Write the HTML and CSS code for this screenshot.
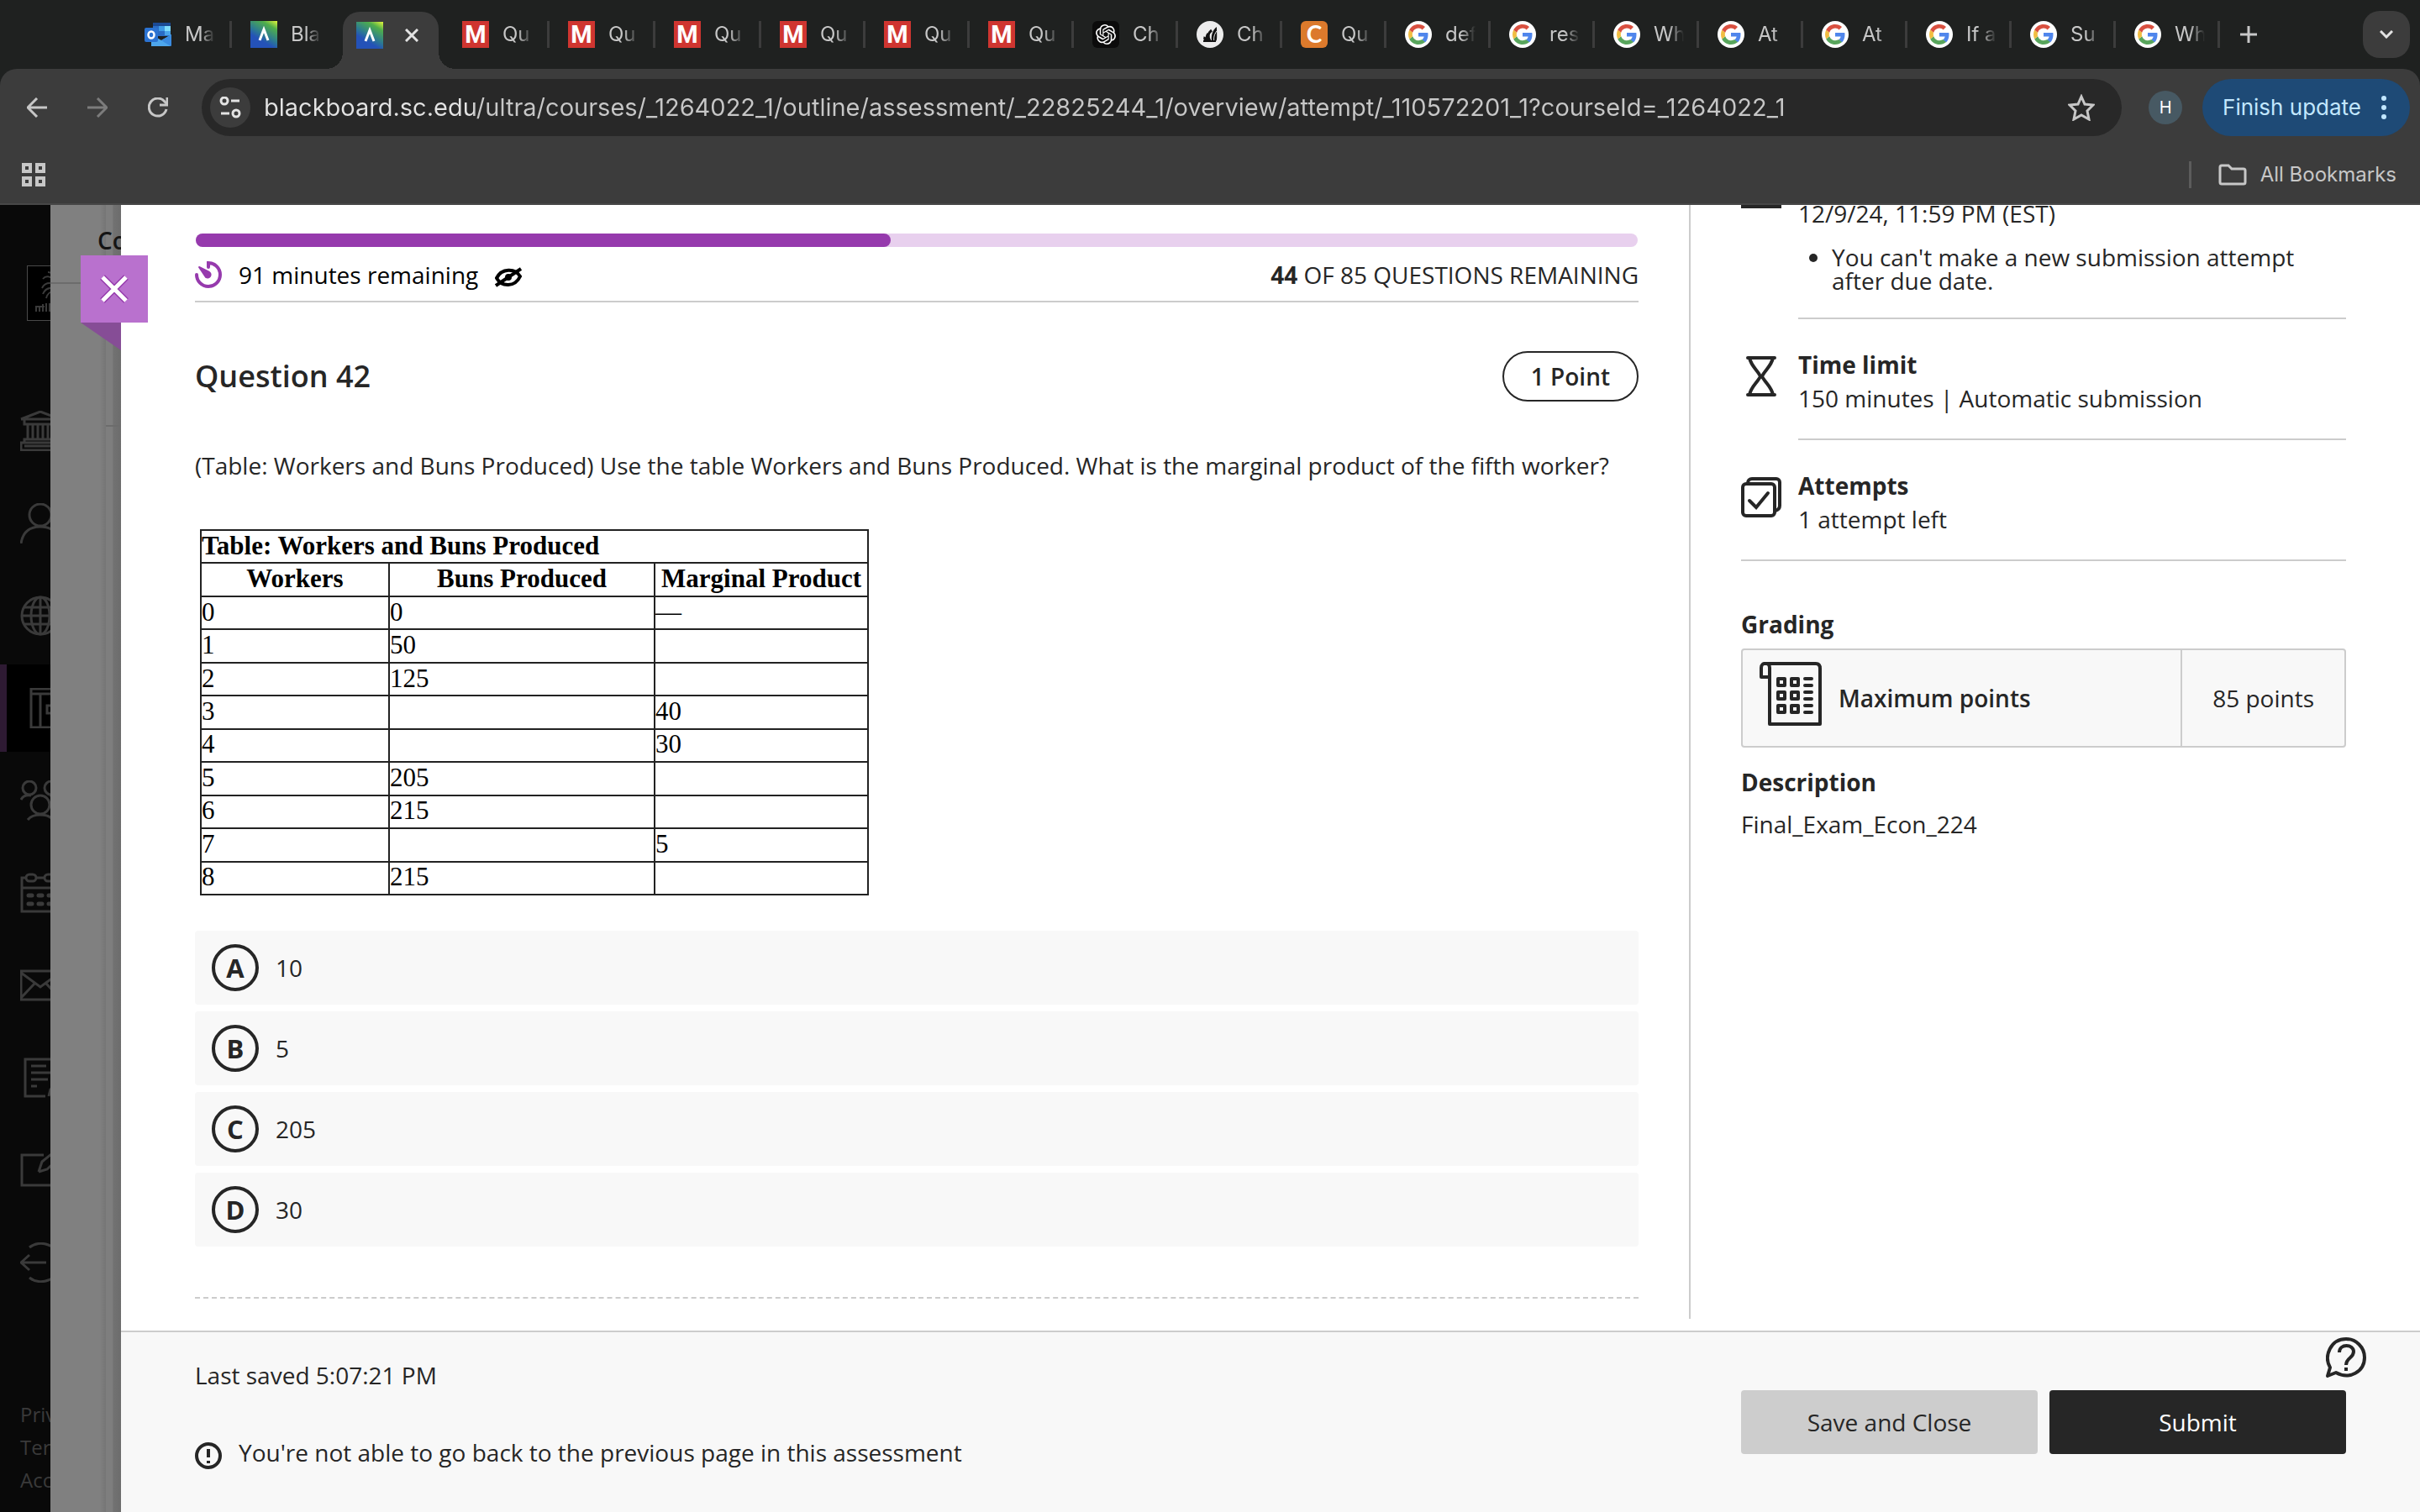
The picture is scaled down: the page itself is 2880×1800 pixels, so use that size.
FILE: index.html
```html
<!DOCTYPE html>
<html lang="en">
<head>
	<meta charset="utf-8">
	<title>Question 42</title>
	<link rel="stylesheet" href="styles.css">
</head>
<body>

	<!-- shared icons -->
	<svg class="defs" width="0" height="0" aria-hidden="true">
		<defs>
			<linearGradient id="bbgrad" x1="1" y1="0" x2="0.4" y2="1">
				<stop offset="0" stop-color="#e4f53a"/>
				<stop offset="0.25" stop-color="#4fae4b"/>
				<stop offset="0.6" stop-color="#2c7a92"/>
				<stop offset="0.8" stop-color="#2452b8"/>
			</linearGradient>
			<symbol id="outlook" viewBox="0 0 32 32">
				<path d="M10 2h21v16H10z" fill="#2a6cc4"/>
				<path d="M10 2h21v4H10z" fill="#1b4a94"/>
				<path d="M17 6h7v6h-7z" fill="#3f9be6"/>
				<path d="M24 6h7v6h-7z" fill="#7fdcfb"/>
				<path d="M24 12h7v5h-7z" fill="#4aa5ea"/>
				<path d="M8 16l12 7 12-7v12a2 2 0 0 1-2 2H8z" fill="#4da6ec"/>
				<path d="M20 23l12-7v12a2 2 0 0 1-1 2z" fill="#3a8be0"/>
				<rect x="0" y="8" width="16" height="17" rx="2" fill="#2b73d2"/>
				<ellipse cx="8" cy="16.500" rx="3.500" ry="4" fill="none" stroke="#fff" stroke-width="2.500"/>
			</symbol>
			<symbol id="bb" viewBox="0 0 32 32">
				<rect width="32" height="32" fill="url(#bbgrad)"/>
				<path d="M11 23l5-13 5 13" fill="none" stroke="#fff" stroke-width="3"/>
			</symbol>
			<symbol id="mcg" viewBox="0 0 32 32">
				<rect width="32" height="32" fill="#cf3530"/>
				<text x="16" y="26" class="fav-m" text-anchor="middle">M</text>
			</symbol>
			<symbol id="gpt" viewBox="0 0 32 32">
				<rect width="32" height="32" rx="6" fill="#0b0b0b"/>
				<g transform="translate(4 4)"><path fill="#fff" d="M22.2819 9.8211a5.9847 5.9847 0 0 0-.5157-4.9108 6.0462 6.0462 0 0 0-6.5098-2.9A6.0651 6.0651 0 0 0 4.9807 4.1818a5.9847 5.9847 0 0 0-3.9977 2.9 6.0462 6.0462 0 0 0 .7427 7.0966 5.98 5.98 0 0 0 .511 4.9107 6.051 6.051 0 0 0 6.5146 2.9001A5.9847 5.9847 0 0 0 13.2599 24a6.0557 6.0557 0 0 0 5.7718-4.2058 5.9894 5.9894 0 0 0 3.9977-2.9001 6.0557 6.0557 0 0 0-.7475-7.0729zm-9.022 12.6081a4.4755 4.4755 0 0 1-2.8764-1.0408l.1419-.0804 4.7783-2.7582a.7948.7948 0 0 0 .3927-.6813v-6.7369l2.02 1.1686a.071.071 0 0 1 .038.052v5.5826a4.504 4.504 0 0 1-4.4945 4.4944zm-9.6607-4.1254a4.4708 4.4708 0 0 1-.5346-3.0137l.142.0852 4.783 2.7582a.7712.7712 0 0 0 .7806 0l5.8428-3.3685v2.3324a.0804.0804 0 0 1-.0332.0615L9.74 19.9502a4.4992 4.4992 0 0 1-6.1408-1.6464zM2.3408 7.8956a4.485 4.485 0 0 1 2.3655-1.9728V11.6a.7664.7664 0 0 0 .3879.6765l5.8144 3.3543-2.0201 1.1685a.0757.0757 0 0 1-.071 0l-4.8303-2.7865A4.504 4.504 0 0 1 2.3408 7.872zm16.5963 3.8558L13.1038 8.364 15.1192 7.2a.0757.0757 0 0 1 .071 0l4.8303 2.7913a4.4944 4.4944 0 0 1-.6765 8.1042v-5.6772a.79.79 0 0 0-.407-.667zm2.0107-3.0231l-.142-.0852-4.7735-2.7818a.7759.7759 0 0 0-.7854 0L9.409 9.2297V6.8974a.0662.0662 0 0 1 .0284-.0615l4.8303-2.7866a4.4992 4.4992 0 0 1 6.6802 4.66zM8.3065 12.863l-2.02-1.1638a.0804.0804 0 0 1-.038-.0567V6.0742a4.4992 4.4992 0 0 1 7.3757-3.4537l-.142.0805L8.704 5.459a.7948.7948 0 0 0-.3927.6813zm1.0976-2.3654l2.602-1.4998 2.6069 1.4998v2.9994l-2.5974 1.4997-2.6067-1.4997Z"/></g>
			</symbol>
			<symbol id="wing" viewBox="0 0 32 32">
				<circle cx="16" cy="16" r="16" fill="#ececec"/>
				<path d="M24 7c-5 4-7 10-6 17h5c2-1 1-10 1-17z" fill="#111"/>
				<path d="M18 11c-4 3-5 8-2 13M14 15c-3 3-2 6 0 9M10 19c-1 2 0 3 1 5" fill="none" stroke="#111" stroke-width="3"/>
				<path d="M24 12c-3 4-4 8-3 13" fill="none" stroke="#ececec" stroke-width="1"/>
				<path d="M8 24h15" stroke="#111" stroke-width="2"/>
			</symbol>
			<symbol id="chegg" viewBox="0 0 32 32">
				<rect width="32" height="32" rx="6" fill="#dc7a2c"/>
				<text x="16" y="26" class="fav-c" text-anchor="middle">C</text>
			</symbol>
			<symbol id="google" viewBox="0 0 32 32">
				<circle cx="16" cy="16" r="16" fill="#fff"/>
				<g transform="translate(4 4)">
					<path fill="#4f86ec" d="M23.5 12.3c0-.9-.1-1.5-.2-2.2H12v4.5h6.6c-.1 1.100-.9 2.800-2.500 3.900l3.900 3c2.300-2.100 3.500-5.200 3.500-9.200z"/>
					<path fill="#58a55c" d="M12 24c3.200 0 6-1.100 8-2.900l-3.900-3c-1 .7-2.400 1.200-4.100 1.200-3.200 0-5.900-2.100-6.800-5l-4 3.100C3.200 21.300 7.300 24 12 24z"/>
					<path fill="#f1be42" d="M5.200 14.300c-.2-.7-.4-1.500-.4-2.300s.1-1.600.4-2.300l-4-3.100C.4 8.300 0 10.100 0 12s.4 3.700 1.200 5.400z"/>
					<path fill="#d95040" d="M12 4.600c2.200 0 3.700 1 4.600 1.800L20 3C18 1.100 15.200 0 12 0 7.300 0 3.200 2.700 1.200 6.600l4 3.100c.9-3 3.600-5.100 6.800-5.100z"/>
				</g>
			</symbol>
		</defs>
	</svg>

	<header class="browser">
		<div class="tabstrip">
			<button class="tab"><svg class="fav"><use href="#outlook"/></svg><span class="name">Ma</span></button>
			<button class="tab"><svg class="fav"><use href="#bb"/></svg><span class="name">Bla</span></button>
			<button class="tab active"><svg class="fav"><use href="#bb"/></svg><svg class="tabclose" viewBox="0 0 16 16"><path d="M1 1l14 14M15 1L1 15"/></svg></button>
			<button class="tab"><svg class="fav"><use href="#mcg"/></svg><span class="name">Qu</span></button>
			<button class="tab"><svg class="fav"><use href="#mcg"/></svg><span class="name">Qu</span></button>
			<button class="tab"><svg class="fav"><use href="#mcg"/></svg><span class="name">Qu</span></button>
			<button class="tab"><svg class="fav"><use href="#mcg"/></svg><span class="name">Qu</span></button>
			<button class="tab"><svg class="fav"><use href="#mcg"/></svg><span class="name">Qu</span></button>
			<button class="tab"><svg class="fav"><use href="#mcg"/></svg><span class="name">Qu</span></button>
			<button class="tab"><svg class="fav"><use href="#gpt"/></svg><span class="name">Ch</span></button>
			<button class="tab"><svg class="fav"><use href="#wing"/></svg><span class="name">Ch</span></button>
			<button class="tab"><svg class="fav"><use href="#chegg"/></svg><span class="name">Qu</span></button>
			<button class="tab"><svg class="fav"><use href="#google"/></svg><span class="name">def</span></button>
			<button class="tab"><svg class="fav"><use href="#google"/></svg><span class="name">res</span></button>
			<button class="tab"><svg class="fav"><use href="#google"/></svg><span class="name">Wh</span></button>
			<button class="tab"><svg class="fav"><use href="#google"/></svg><span class="name">At</span></button>
			<button class="tab"><svg class="fav"><use href="#google"/></svg><span class="name">At</span></button>
			<button class="tab"><svg class="fav"><use href="#google"/></svg><span class="name">If a</span></button>
			<button class="tab"><svg class="fav"><use href="#google"/></svg><span class="name">Su</span></button>
			<button class="tab"><svg class="fav"><use href="#google"/></svg><span class="name">Wh</span></button>
			<button class="newtab" aria-label="New tab"><svg viewBox="0 0 20 20"><path d="M10 0v20M0 10h20"/></svg></button>
			<button class="tabsearch" aria-label="Search tabs"><svg viewBox="0 0 16 10"><path d="M1 1l7 7 7-7"/></svg></button>
		</div>

		<div class="toolbar">
			<button class="nav" aria-label="Back"><svg viewBox="0 0 24 24"><path d="M24 12H2M12 1L1 12l11 11"/></svg></button>
			<button class="nav off" aria-label="Forward"><svg viewBox="0 0 24 24"><path d="M0 12h22M12 1l11 11-11 11"/></svg></button>
			<button class="nav" aria-label="Reload"><svg viewBox="0 0 24 24"><path d="M22 14a10.500 10.500 0 1 1-2-9l3 3"/><path d="M23 0v9h-9"/></svg></button>
			<div class="omnibox">
				<button class="siteinfo" aria-label="Site information"><svg viewBox="0 0 26 26"><circle cx="6" cy="5" r="4"/><path d="M14 5h10M2 20h10"/><circle cx="20" cy="20" r="4"/></svg></button>
				<input class="url" type="text" aria-label="Address" value="blackboard.sc.edu/ultra/courses/_1264022_1/outline/assessment/_22825244_1/overview/attempt/_110572201_1?courseId=_1264022_1">
				<button class="star" aria-label="Bookmark"><svg viewBox="0 0 32 32"><path d="M16 3l4 9 10 1-7 7 2 10-9-5-9 5 2-10-7-7 10-1z"/></svg></button>
			</div>
			<button class="avatar">H</button>
			<button class="update">Finish update <svg viewBox="0 0 6 28"><circle cx="3" cy="3" r="3"/><circle cx="3" cy="14" r="3"/><circle cx="3" cy="25" r="3"/></svg></button>
		</div>

		<div class="bookmarks">
			<button class="apps" aria-label="Apps"><svg viewBox="0 0 28 28"><path d="M2 2h8v8H2zM18 2h8v8h-8zM2 18h8v8H2zM18 18h8v8h-8z"/></svg></button>
			<button class="allmarks"><svg viewBox="0 0 34 26"><path d="M2 4a2 2 0 0 1 2-2h8l4 4h14a2 2 0 0 1 2 2v14a2 2 0 0 1-2 2H4a2 2 0 0 1-2-2z"/></svg>All Bookmarks</button>
		</div>
	</header>

	<div class="page">
		<nav class="sidebar">
			<div class="brand"><svg viewBox="0 0 64 64"><path d="M10 54v-7M14 54v-7M18 54v-9M22 54V44M26 54V44M9 48h11M32 54V22M32 22c-6-4-12-2-15 4M32 18c-4-6-10-8-14-3M32 14c-2-5-5-7-8-7M32 26c-7-1-12 2-14 7M32 30c-5 0-9 3-10 8"/></svg></div>
			<div class="menu">
				<a href="#" aria-label="Institution"><svg viewBox="0 0 48 48"><path d="M1 10L24 1l23 9H1M5 10v6h38v-6M9 17v17M15 17v17M21 17v17M27 17v17M33 17v17M39 17v17M5 38v-4h38v4M1 47v-9h46v9zM5 42h38"/></svg></a>
				<a href="#" aria-label="Profile"><svg viewBox="0 0 48 48"><circle cx="24" cy="14" r="13"/><path d="M1 48c2-13 10-20 23-20s21 7 23 20"/></svg></a>
				<a href="#" aria-label="Activity"><svg viewBox="0 0 48 48"><circle cx="24" cy="24" r="22"/><ellipse cx="24" cy="24" rx="11" ry="22"/><path d="M24 2v44M2 24h44M5 14h38M5 34h38"/></svg></a>
				<a href="#" class="current" aria-label="Courses"><svg viewBox="0 0 48 48"><path d="M13 1h34v46H13zM13 7h34M24 7v40M32 21h14v9H32z"/></svg></a>
				<a href="#" aria-label="Organizations"><svg viewBox="0 0 48 48"><circle cx="11" cy="9" r="8"/><circle cx="37" cy="9" r="8"/><circle cx="24" cy="29" r="11"/><path d="M1 23c2-4 6-6 12-5M47 23c-2-4-6-6-12-5M9 47c6-8 24-8 30 0"/></svg></a>
				<a href="#" aria-label="Calendar"><svg viewBox="0 0 48 48"><path d="M7 6H2v40h44V6h-5M18 6h12M2 18h44"/><rect x="7" y="2" width="12" height="8" rx="4"/><rect x="29" y="2" width="12" height="8" rx="4"/><path class="dots" d="M10 27h4M22 27h4M34 27h4M10 37h4M22 37h4M34 37h4"/></svg></a>
				<a href="#" aria-label="Messages"><svg viewBox="0 0 48 48"><path d="M1 7h46v34H1zM1 9l23 17L47 9M1 39l16-17M47 39L31 22"/></svg></a>
				<a href="#" aria-label="Grades"><svg viewBox="0 0 48 48"><path d="M30 46H6V2h38v20M13 10h18M13 18h24M13 26h20M13 34h7M34 46l2-8 10-10"/></svg></a>
				<a href="#" aria-label="Tools"><svg viewBox="0 0 48 48"><path d="M28 6H2v36h44V26M22 26l4-12L42 1M22 26l10-3L48 8"/></svg></a>
				<a href="#" aria-label="Sign out"><svg viewBox="0 0 48 48"><path d="M11 6c12-10 36-4 36 18S23 52 11 42M1 24h30M11 15L1 24l10 9"/></svg></a>
			</div>
			<div class="legal">
				<a href="#">Priv</a>
				<a href="#">Ter</a>
				<a href="#">Acc</a>
			</div>
		</nav>

		<div class="behind">
			<div class="tabline"><span>Co</span></div>
			<div class="layer"></div>
		</div>

		<button class="close" aria-label="Close"><svg viewBox="0 0 36 36"><path class="edge" d="M4 4l28 28M32 4L4 32"/><path d="M4 4l28 28M32 4L4 32"/></svg></button>

		<main class="exam">
			<div class="columns">
				<section class="questions">
					<div class="progress"><div class="done"></div></div>
					<div class="status">
						<svg class="timer" viewBox="0 0 32 32"><path d="M16 7V2a14 14 0 1 1-14 14"/><path class="hand" d="M5 7l12 6a3 3 0 0 1-4 6z"/></svg>
						<span class="time">91 minutes remaining</span>
						<button class="hide" aria-label="Hide timer"><svg viewBox="0 0 32 24"><path d="M2 13C8 1 24 1 30 11C24 24 8 24 2 13z"/><circle cx="16" cy="12" r="2"/><path d="M1 22L31 2"/></svg></button>
						<span class="left"><b>44</b> OF 85 QUESTIONS REMAINING</span>
					</div>

					<div class="title">
						<h1>Question 42</h1>
						<span class="pill">1 Point</span>
					</div>
					<p class="prompt">(Table: Workers and Buns Produced) Use the table Workers and Buns Produced. What is the marginal product of the fifth worker?</p>

					<table class="buns">
						<colgroup><col class="c1"><col class="c2"><col></colgroup>
						<tr><th colspan="3" class="caption">Table: Workers and Buns Produced</th></tr>
						<tr><th>Workers</th><th>Buns Produced</th><th>Marginal Product</th></tr>
						<tr><td>0</td><td>0</td><td>—</td></tr>
						<tr><td>1</td><td>50</td><td></td></tr>
						<tr><td>2</td><td>125</td><td></td></tr>
						<tr><td>3</td><td></td><td>40</td></tr>
						<tr><td>4</td><td></td><td>30</td></tr>
						<tr><td>5</td><td>205</td><td></td></tr>
						<tr><td>6</td><td>215</td><td></td></tr>
						<tr><td>7</td><td></td><td>5</td></tr>
						<tr><td>8</td><td>215</td><td></td></tr>
					</table>

					<div class="answers">
						<label class="answer" for="a"><span class="mark"><input type="radio" name="answer" id="a"><b>A</b></span>10</label>
						<label class="answer" for="b"><span class="mark"><input type="radio" name="answer" id="b"><b>B</b></span>5</label>
						<label class="answer" for="c"><span class="mark"><input type="radio" name="answer" id="c"><b>C</b></span>205</label>
						<label class="answer" for="d"><span class="mark"><input type="radio" name="answer" id="d"><b>D</b></span>30</label>
					</div>
				</section>

				<aside class="details">
					<ul class="facts">
						<li>
							<svg class="cut" viewBox="0 0 48 14"><path d="M2 0v12h44V0" /><path d="M0 10h48"/></svg>
							<div class="fact">
								<p>12/9/24, 11:59 PM (EST)</p>
								<ul class="notes"><li>You can't make a new submission attempt after due date.</li></ul>
							</div>
						</li>
						<li>
							<svg viewBox="0 0 48 48"><path d="M8 2h32M8 46h32M10 2c2 10 10 15 13 22-3 7-11 12-13 22M38 2c-2 10-10 15-13 22 3 7 11 12 13 22"/></svg>
							<div class="fact">
								<h2>Time limit</h2>
								<p>150 minutes | Automatic submission</p>
							</div>
						</li>
						<li>
							<svg viewBox="0 0 48 48"><rect x="2" y="8" width="38" height="38" rx="4"/><path d="M8 7c0-3 2-5 5-5h29c2 0 4 2 4 4v28c0 3-2 5-5 6M10 28l8 8 14-17"/></svg>
							<div class="fact">
								<h2>Attempts</h2>
								<p>1 attempt left</p>
							</div>
						</li>
					</ul>

					<h2>Grading</h2>
					<div class="grading">
						<div class="what">
							<svg viewBox="0 0 74 76"><path d="M12 18H2V7c0-7 10-7 10 0zM12 8v66h60V8c0-4-2-6-5-6H7"/><path class="cells" d="M22 20h8v8h-8zM38 20h8v8h-8zM22 36h8v8h-8zM38 36h8v8h-8zM22 52h8v8h-8zM38 52h8v8h-8z"/><path class="bars" d="M54 20h8M54 28h8M54 36h8M54 44h8M54 52h8M54 60h8"/></svg>
							<span>Maximum points</span>
						</div>
						<div class="points">85 points</div>
					</div>
					<h2>Description</h2>
					<p class="desc">Final_Exam_Econ_224</p>
				</aside>
			</div>

			<footer class="bottom">
				<div class="saved">
					<p>Last saved 5:07:21 PM</p>
					<p class="warn"><svg viewBox="0 0 32 32"><circle cx="16" cy="16" r="14"/><path d="M16 8v10M16 22v3"/></svg>You're not able to go back to the previous page in this assessment</p>
				</div>
				<div class="actions">
					<button class="btn save">Save and Close</button>
					<button class="btn submit">Submit</button>
				</div>
				<button class="help" aria-label="Help"><svg viewBox="0 0 48 48"><path d="M2 46l3-10C-3 22 6 2 24 2c12 0 22 10 22 22 0 17-18 27-34 18z"/><path d="M16 18c0-11 17-10 17-1 0 8-9 7-9 16M24 36v4"/></svg></button>
			</footer>
		</main>
	</div>

</body>
</html>
```

FILE: styles.css
```css
*{box-sizing:border-box;}
body{margin:0; height:100vh; display:flex; flex-direction:column; overflow:hidden; font-family:"Open Sans", "Noto Sans", sans-serif; font-size:28px; line-height:40px; color:#262626; background-color:#fff;}
button{font:inherit; color:inherit; background:none; border:0; padding:0; cursor:pointer;}
h1, h2, p, ul{margin:0; padding:0;}
svg{display:block; flex:none; fill:none; stroke:currentColor;}
.defs{position:absolute;}
symbol{stroke:none;}

/* browser window */
.browser{background-color:#1f2120; color:#c7c7c7; font-family:Inter, "Liberation Sans", sans-serif;}
.tabstrip{display:flex; align-items:center; height:82px; padding:0 12px 0 150px;}
.tab{flex:0 1 124px; min-width:0; height:32px; display:flex; align-items:center; gap:16px; padding-left:22px; border-right:3px solid #3c3c3c; font-size:24px; line-height:32px; text-align:left;}
.tab:nth-child(-n+6){flex-basis:126px;}
.tab:nth-child(2){border-color:transparent;}
.fav{width:32px; height:32px; stroke:none;}
.fav-m{font:bold 29px Roboto, sans-serif; fill:#fff;}
.fav-c{font:bold 28px Lato, sans-serif; fill:#fff;}
.name{flex:none; width:40px; overflow:hidden; white-space:nowrap; mask-image:linear-gradient(90deg, #000 45%, transparent 90%);}
.active{position:relative; height:68px; align-self:flex-end; flex-basis:114px !important; margin:0 6px; padding:0 0 12px 16px; gap:26px; border:0; border-radius:20px 20px 0 0; background-color:#3c3c3c;}
.active::before, .active::after{content:""; position:absolute; bottom:0; width:20px; height:20px;}
.active::before{right:100%; background:radial-gradient(circle at 0 0, transparent 20px, #3c3c3c 20px);}
.active::after{left:100%; background:radial-gradient(circle at 100% 0, transparent 20px, #3c3c3c 20px);}
.tabclose{width:16px; height:16px; stroke:#e3e3e3; stroke-width:3;}
.newtab{margin-left:24px;}
.newtab svg{width:20px; height:20px; stroke-width:3;}
.tabsearch{margin-left:auto; width:56px; height:56px; border-radius:20px; background-color:#3c3c3c; display:grid; place-items:center; color:#e3e3e3;}
.tabsearch svg{width:16px; height:10px; stroke-width:3;}

.toolbar{display:flex; align-items:center; height:92px; padding:0 12px 0 32px; background-color:#3c3c3c; border-radius:20px 20px 0 0;}
.nav{margin-right:48px;}
.nav svg{width:24px; height:24px; stroke-width:3;}
.off{color:#7c7c7c;}
.omnibox{flex:1; display:flex; align-items:center; height:68px; margin:0 32px 0 -8px; padding:0 32px 0 10px; border-radius:34px; background-color:#282828;}
.siteinfo{width:48px; height:48px; border-radius:50%; background-color:#3c3c3c; display:grid; place-items:center; color:#e3e3e3;}
.siteinfo svg{width:26px; height:26px; stroke-width:3;}
.url{flex:1; min-width:0; height:40px; margin-left:16px; padding:0; border:0; outline:0; font:29px/40px Inter, "Liberation Sans", sans-serif; color:transparent; background:linear-gradient(90deg, #e3e3e3 250px, #c7c7c7 250px); background-clip:text; -webkit-background-clip:text;}
.star svg{width:32px; height:32px; stroke-width:3;}
.avatar{width:40px; height:40px; margin-right:24px; border-radius:50%; background-color:#475963; color:#fff; font-size:20px;}
.update{display:flex; align-items:center; gap:24px; height:68px; padding:0 28px 0 24px; border-radius:34px; background-color:#1e4a76; color:#c2e7ff; font-size:26px; white-space:nowrap;}
.update svg{width:6px; height:28px; fill:#c2e7ff; stroke:none;}

.bookmarks{display:flex; align-items:center; justify-content:space-between; height:70px; padding:0 28px 0 26px; background-color:#3c3c3c; border-bottom:2px solid #474747;}
.apps svg{width:28px; height:28px; stroke-width:4;}
.allmarks{display:flex; align-items:center; gap:16px; height:32px; padding-left:32px; border-left:3px solid #5c5c5c; font-size:24px;}
.allmarks svg{width:34px; height:26px; stroke-width:3;}

/* course page under the overlay */
.page{flex:1; min-height:0; position:relative; display:flex;}
.sidebar{width:60px; overflow:hidden; background-color:#090909; color:#3a3a3a; display:flex; flex-direction:column;}
.brand{flex:none; width:66px; height:66px; margin:72px 0 0 32px; border:1px solid #4a4a4a; background-color:#000;}
.brand svg{width:64px; height:64px; stroke-width:2;}
.menu{display:flex; flex-direction:column; gap:6px; margin-top:79px;}
.menu a{display:flex; align-items:center; width:96px; height:104px; padding-left:24px; color:inherit;}
.menu svg{width:48px; height:48px; stroke-width:3;}
.menu .dots{stroke-width:5; stroke-linecap:round;}
.menu .current{padding-left:16px; border-left:8px solid #2e1a33; background-color:#000;}
.legal{display:flex; flex-direction:column; margin:auto 0 19px 24px;}
.legal a{font-size:24px; line-height:39px; color:inherit; text-decoration:none;}
.behind{width:84px; overflow:hidden; background:linear-gradient(90deg, #808080 70%, #767676 78%, #7e7e7e 79%, #7e7e7e 88%, #727272 89%, #6c6c6c); display:flex; flex-direction:column;}
.tabline{height:94px; padding:22px 0 0 56px; border-bottom:2px solid #6c6c6c; color:#141414; font-weight:600;}
.tabline span{display:block; white-space:nowrap;}
.layer{height:170px; margin-left:66px; border-bottom:2px solid #6c6c6c;}
.close{position:absolute; left:96px; top:60px; width:80px; height:80px; background-color:#b971ce; color:#fff; display:grid; place-items:center;}
.close svg{width:36px; height:36px; stroke-width:5;}
.close .edge{stroke:#963aad; stroke-width:8;}
.close::after{content:""; position:absolute; left:0; top:100%; width:48px; height:33px; background-color:#864d96; clip-path:polygon(0 0, 100% 0, 100% 100%);}

/* assessment panel */
.exam{flex:1; min-width:0; display:flex; flex-direction:column; background-color:#fff;}
.columns{flex:1; min-height:0; display:flex; padding-bottom:14px; overflow:hidden;}
.questions{flex:1; padding:34px 60px 0 88px;}
.progress{height:16px; margin:0 1px; border-radius:8px; background-color:#e8d0ee; overflow:hidden;}
.done{width:48.2%; height:100%; border-radius:0 8px 8px 0; background-color:#963aad;}
.status{display:flex; align-items:center; padding:13px 0 11px; border-bottom:2px solid #ccc;}
.timer{width:32px; height:32px; stroke:#963aad; stroke-width:4; stroke-linecap:round;}
.timer .hand{fill:#963aad; stroke-width:2; stroke-linejoin:round;}
.time{margin:0 20px; color:#000;}
.hide{color:#000; padding-top:6px;}
.hide svg{width:32px; height:24px; stroke-width:4;}
.left{margin-left:auto;}
.title{display:flex; align-items:center; justify-content:space-between; margin-top:58px;}
h1{font-size:36px; line-height:60px; font-weight:600;}
.pill{padding:0 32px; border:2px solid #262626; border-radius:30px; line-height:56px; font-weight:600;}
.prompt{margin-top:56px;}

.buns{width:796px; height:436px; margin:56px 0 42px 6px; table-layout:fixed; border-collapse:collapse; font-family:"Liberation Serif", serif; font-size:31px; line-height:34px; color:#000;}
.buns .c1{width:224px;}
.buns .c2{width:316px;}
.buns th, .buns td{padding:0 0 2px; border:2px solid #222;}
.buns td, .buns .caption{text-align:left;}
.buns tr{height:39px;}

.answers{display:grid; gap:8px; padding-bottom:60px; border-bottom:2px dashed #ccc;}
.answer{display:flex; align-items:center; gap:20px; height:88px; padding:0 20px; border-radius:4px; background-color:#f8f8f8;}
.mark{display:grid; place-items:center; font-size:31px;}
.mark input, .mark b{grid-area:1 / 1;}
.mark input{appearance:none; width:56px; height:56px; margin:0; border:4px solid #262626; border-radius:50%;}

h2{font-size:28px; line-height:40px; font-weight:bold;}
.details{flex:0 0 870px; padding:0 88px 0 60px; border-left:2px solid #ccc;}
.facts{margin:-10px 0 55px; list-style:none; border-bottom:2px solid #ccc;}
.facts > li{display:flex; gap:20px;}
.facts svg{width:48px; height:48px; margin-top:44px; stroke-width:4; stroke-linecap:round;}
.facts .cut{height:14px; margin-top:0; stroke-linecap:butt;}
.fact{flex:1; padding:34px 0 28px; border-bottom:2px solid #ccc;}
.facts > li:first-child .fact{padding-top:0;}
.facts > li:last-child .fact{border:0;}
.notes{margin-top:18px; padding:0 0 2px 40px; list-style:disc; line-height:28px;}
.grading{display:flex; height:118px; margin:9px 0 21px; border:2px solid #ccc; border-radius:4px; background-color:#f8f8f8;}
.what{flex:1; display:flex; align-items:center; gap:20px; padding-left:20px; font-weight:600;}
.what svg{width:74px; height:76px; align-self:flex-start; margin-top:14px; stroke-width:4; stroke-linejoin:round;}
.what .bars{stroke-linecap:round;}
.points{padding:0 36px; border-left:2px solid #ccc; line-height:114px;}
.desc{margin-top:10px;}

.bottom{flex:0 0 216px; position:relative; display:flex; border-top:2px solid #ccc; background-color:#f8f8f8;}
.saved{flex:1; padding:31px 60px 0 88px;}
.warn{display:flex; align-items:flex-end; gap:20px; margin-top:52px;}
.warn svg{width:32px; height:32px; stroke-width:4;}
.actions{flex:0 0 870px; display:flex; gap:14px; padding:69px 88px 0 62px;}
.btn{flex:1; height:76px; border-radius:4px;}
.save{background-color:#cdcdcd;}
.submit{background-color:#262626; color:#fff;}
.help{position:absolute; right:64px; top:6px;}
.help svg{width:48px; height:48px; stroke-width:4; stroke-linejoin:round;}
```
